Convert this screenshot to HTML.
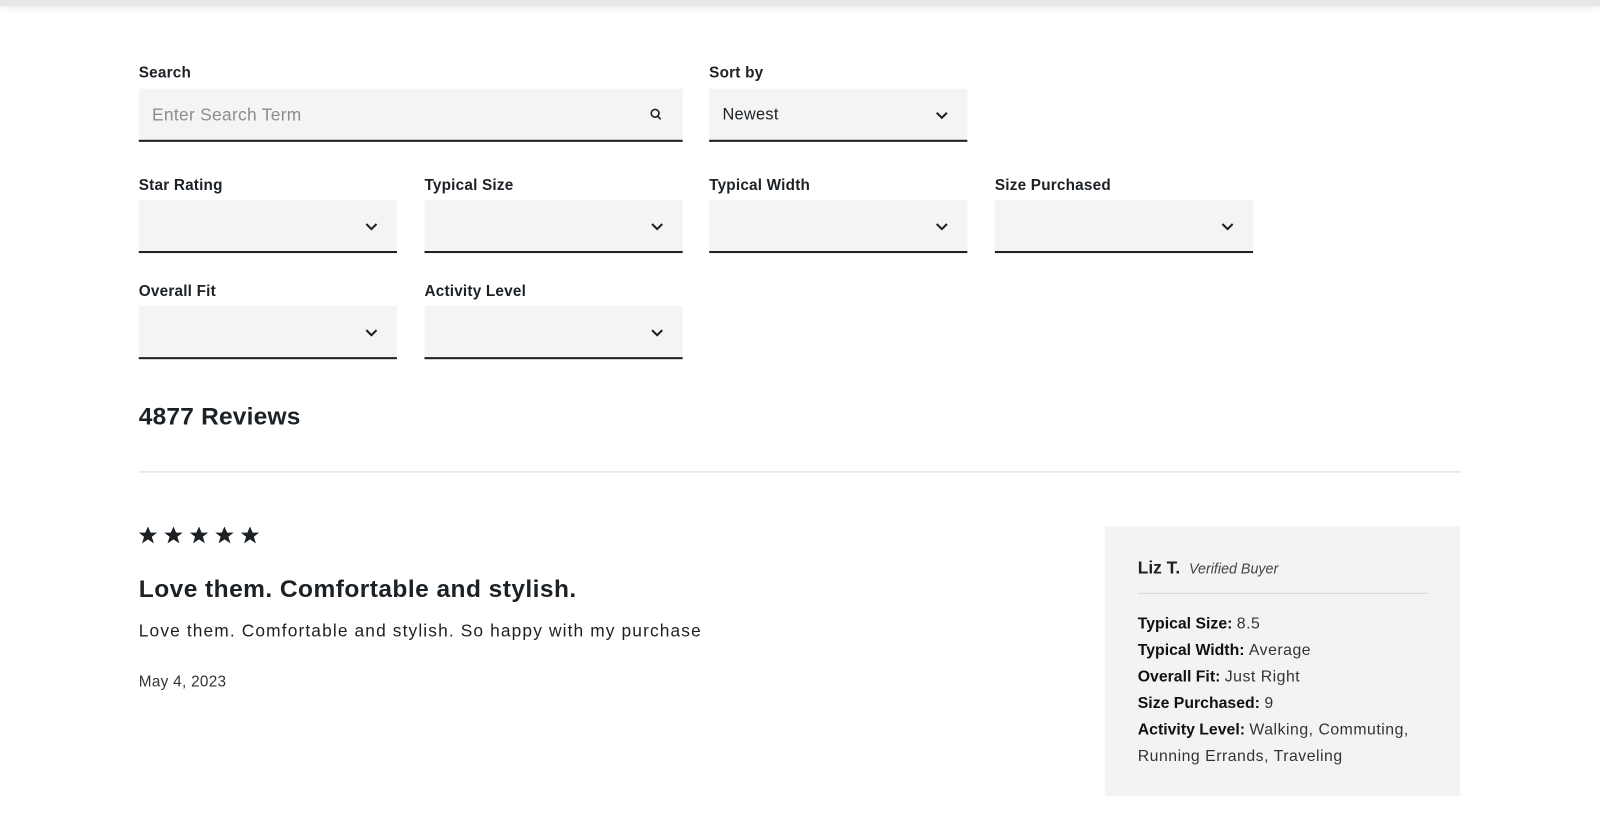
<!DOCTYPE html>
<html><head><style>
*{margin:0;padding:0;box-sizing:border-box}
body{width:1600px;height:832px;background:#fff;font-family:"Liberation Sans",sans-serif;color:#1c2126;position:relative;overflow:hidden}
#w{position:absolute;left:0;top:0;width:1568px;height:816px;transform:scale(1.0204);transform-origin:0 0}
.top{position:absolute;left:0;top:0;width:1568px;height:6px;background:#e8e8e8;box-shadow:0 2px 6px rgba(0,0,0,.08)}
.lbl{position:absolute;font-size:15px;font-weight:bold;letter-spacing:.2px}
.box{position:absolute;background:#f4f4f4;border-bottom:2px solid #1c2126;height:52px;width:253px}
.chev{position:absolute;right:18px;top:21px;width:14px;height:10px}
.abs{position:absolute}
.v{letter-spacing:.5px}
</style></head><body><div id="w">
<div class="top"></div>
<div class="lbl" style="left:136px;top:63px">Search</div>
<div class="box" style="left:136px;top:87px;width:533px"><span class="abs" style="left:13px;top:16px;font-size:17px;color:#8a8d90;letter-spacing:.3px">Enter Search Term</span>
<svg class="abs" style="right:20px;top:19px" width="12" height="13" viewBox="0 0 12 13"><circle cx="5" cy="5" r="3.8" fill="none" stroke="#1c2126" stroke-width="1.6"/><path d="M7.6 7.8L10.5 11" stroke="#1c2126" stroke-width="1.6"/></svg></div>
<div class="lbl" style="left:695px;top:63px">Sort by</div>
<div class="box" style="left:695px;top:87px"><span class="abs" style="left:13px;top:17px;font-size:16px;letter-spacing:.3px">Newest</span><svg class="chev" viewBox="0 0 14 10"><path d="M2 2.5L7 7.5L12 2.5" fill="none" stroke="#1c2126" stroke-width="2"/></svg></div>

<div class="lbl" style="left:136px;top:173px">Star Rating</div>
<div class="lbl" style="left:416px;top:173px">Typical Size</div>
<div class="lbl" style="left:695px;top:173px">Typical Width</div>
<div class="lbl" style="left:975px;top:173px">Size Purchased</div>
<div class="box" style="left:136px;top:196px"><svg class="chev" viewBox="0 0 14 10"><path d="M2 2.5L7 7.5L12 2.5" fill="none" stroke="#1c2126" stroke-width="2"/></svg></div>
<div class="box" style="left:416px;top:196px"><svg class="chev" viewBox="0 0 14 10"><path d="M2 2.5L7 7.5L12 2.5" fill="none" stroke="#1c2126" stroke-width="2"/></svg></div>
<div class="box" style="left:695px;top:196px"><svg class="chev" viewBox="0 0 14 10"><path d="M2 2.5L7 7.5L12 2.5" fill="none" stroke="#1c2126" stroke-width="2"/></svg></div>
<div class="box" style="left:975px;top:196px"><svg class="chev" viewBox="0 0 14 10"><path d="M2 2.5L7 7.5L12 2.5" fill="none" stroke="#1c2126" stroke-width="2"/></svg></div>

<div class="lbl" style="left:136px;top:277px">Overall Fit</div>
<div class="lbl" style="left:416px;top:277px">Activity Level</div>
<div class="box" style="left:136px;top:300px"><svg class="chev" viewBox="0 0 14 10"><path d="M2 2.5L7 7.5L12 2.5" fill="none" stroke="#1c2126" stroke-width="2"/></svg></div>
<div class="box" style="left:416px;top:300px"><svg class="chev" viewBox="0 0 14 10"><path d="M2 2.5L7 7.5L12 2.5" fill="none" stroke="#1c2126" stroke-width="2"/></svg></div>

<div class="abs" style="left:136px;top:395px;font-size:24px;font-weight:bold;letter-spacing:.2px">4877 Reviews</div>
<div class="abs" style="left:136px;top:462px;width:1296px;height:1px;background:#d8d8d8"></div>

<svg class="abs" style="left:135px;top:515px" width="125" height="20" viewBox="0 0 125 20">
<g fill="#1c2126"><path id="s" d="M10 1l2.6 6h6.4l-5.2 4 2 6.5L10 13.6 4.2 17.5l2-6.5L1 7h6.4z"/><use href="#s" x="25"/><use href="#s" x="50"/><use href="#s" x="75"/><use href="#s" x="100"/></g></svg>
<div class="abs" style="left:136px;top:564px;font-size:24px;font-weight:bold;letter-spacing:.45px">Love them. Comfortable and stylish.</div>
<div class="abs" style="left:136px;top:609px;font-size:17px;letter-spacing:1.1px">Love them. Comfortable and stylish. So happy with my purchase</div>
<div class="abs" style="left:136px;top:660px;font-size:15px;color:#333;letter-spacing:.3px">May 4, 2023</div>

<div class="abs" style="left:1083px;top:516px;width:348px;height:264px;background:#f3f3f3">
<div class="abs" style="left:32px;top:31px;font-size:17px;font-weight:bold">Liz T. <span style="font-size:14px;font-weight:normal;font-style:italic;color:#444;margin-left:4px">Verified Buyer</span></div>
<div class="abs" style="left:32px;top:65px;width:284px;height:1px;background:#d8d8d8"></div>
<div class="abs" style="left:32px;top:83px;width:310px;font-size:15.5px;line-height:26px;color:#333">
<b style="color:#111">Typical Size:</b> <span class="v">8.5</span><br><b style="color:#111">Typical Width:</b> <span class="v">Average</span><br><b style="color:#111">Overall Fit:</b> <span class="v">Just Right</span><br><b style="color:#111">Size Purchased:</b> <span class="v">9</span><br><b style="color:#111">Activity Level:</b> <span class="v">Walking, Commuting,<br>Running Errands, Traveling</span></div>
</div>
</div></body></html>
